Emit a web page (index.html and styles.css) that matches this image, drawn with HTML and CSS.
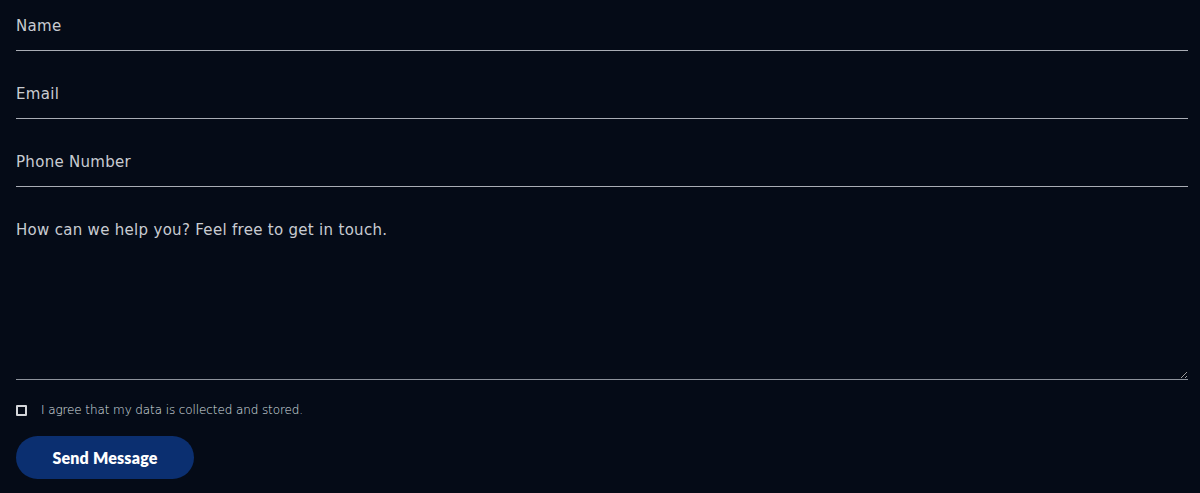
FILE: index.html
```html
<!DOCTYPE html>
<html lang="en">
<head>
<meta charset="utf-8">
<title>Contact</title>
<link rel="stylesheet" href="styles.css">
</head>
<body>
<form class="contact-form">
  <input class="field" type="text" placeholder="Name">
  <input class="field" type="email" placeholder="Email">
  <input class="field" type="tel" placeholder="Phone Number">
  <textarea class="field message" placeholder="How can we help you? Feel free to get in touch."></textarea>
  <label class="consent">
    <span class="box"></span>
    <span class="consent-text">I agree that my data is collected and stored.</span>
  </label>
  <button class="send" type="button">Send Message</button>
</form>
</body>
</html>
```
FILE: styles.css
```css
html, body {
  margin: 0;
  padding: 0;
  background: #050b17;
  height: 100%;
  overflow: hidden;
}
body {
  font-family: "DejaVu Sans", "Open Sans", sans-serif;
  color: #cdd0d6;
}
.contact-form {
  display: flex;
  flex-direction: column;
  padding: 0 12px 0 16px;
}
.field {
  box-sizing: border-box;
  width: 100%;
  height: 51px;
  margin: 0 0 17px 0;
  padding: 1px 0 0 0;
  background: transparent;
  border: none;
  border-bottom: 1px solid #a9adb5;
  color: #cdd0d6;
  font-family: inherit;
  font-size: 15px;
  letter-spacing: 0.3px;
  outline: none;
}
.field::placeholder {
  color: #c9ccd2;
  opacity: 1;
}
.message {
  height: 176px;
  padding-top: 17px;
  resize: vertical;
  margin-bottom: 22px;
  border-bottom-color: #8e939c;
}
.consent {
  display: flex;
  align-items: center;
  gap: 14px;
  height: 16px;
}
.box {
  box-sizing: border-box;
  width: 11px;
  height: 11px;
  border: 2px solid #d4d6da;
  border-radius: 1px;
}
.consent-text {
  font-size: 12px;
  font-weight: 200;
  color: #dfe1e5;
  letter-spacing: -0.1px;
}
.send {
  margin-top: 18px;
  align-self: flex-start;
  width: 178px;
  height: 43px;
  border: none;
  border-radius: 22px;
  background: #0b2f70;
  color: #ffffff;
  font-family: "Lato", "Open Sans", sans-serif;
  font-weight: 800;
  font-size: 16px;
  letter-spacing: 0.2px;
}
```
